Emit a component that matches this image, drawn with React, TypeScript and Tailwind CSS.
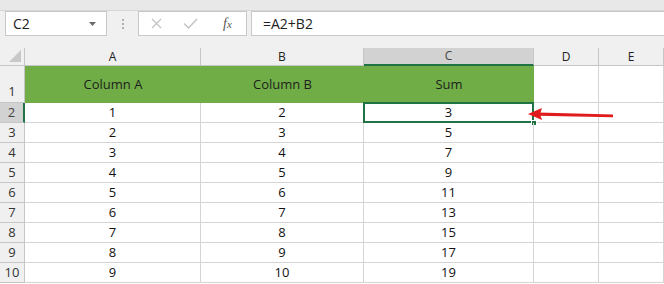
import React from 'react';

const cols = ['A', 'B', 'C', 'D', 'E'];
const widths = ['w-[176px]', 'w-[163px]', 'w-[170px]', 'w-[65px]', 'w-[65px]'];

const rows: [number, number, number][] = [
  [1, 2, 3],
  [2, 3, 5],
  [3, 4, 7],
  [4, 5, 9],
  [5, 6, 11],
  [6, 7, 13],
  [7, 8, 15],
  [8, 9, 17],
  [9, 10, 19],
];

function FormulaBar() {
  return (
    <div className="h-[48px] bg-[#f0f0f0] flex flex-col">
      <div className="h-[11px] bg-[#e8e8e8] border-b border-[#d6d6d6]" />
      <div className="flex items-stretch h-[25px] pl-[5px]">
        <div className="w-[102px] bg-white border border-[#c8c8c8] flex items-center justify-between pl-[7px] pr-[10px] text-[14px] text-[#222]">
          <span>C2</span>
          <svg width="7" height="4" viewBox="0 0 7 4">
            <path d="M0 0 L7 0 L3.5 4 Z" fill="#6a6a6a" />
          </svg>
        </div>
        <div className="w-[31px] flex flex-col items-center justify-center gap-[2px]">
          <span className="w-[2px] h-[2px] bg-[#b0b0b0]" />
          <span className="w-[2px] h-[2px] bg-[#b0b0b0]" />
          <span className="w-[2px] h-[2px] bg-[#b0b0b0]" />
        </div>
        <div className="w-[109px] bg-white border border-[#c8c8c8] flex items-center pl-[12px]">
          <svg width="11" height="11" viewBox="0 0 11 11">
            <path d="M1 1 L10 10 M10 1 L1 10" stroke="#c4c4c4" strokeWidth="1.3" />
          </svg>
          <svg width="15" height="11" viewBox="0 0 15 11" className="ml-[21px]">
            <path d="M1 5.5 L5.5 10 L14 1" stroke="#c4c4c4" strokeWidth="1.5" fill="none" />
          </svg>
          <span className="ml-[25px] italic text-[14px] text-[#555] font-['Liberation_Serif',serif]">
            f<span className="text-[11px]">x</span>
          </span>
        </div>
        <div className="w-[4px]" />
        <div className="flex-1 bg-white border border-[#c8c8c8] border-r-0 flex items-center pl-[11px] text-[14px] text-[#222]">
          =A2+B2
        </div>
      </div>
    </div>
  );
}

function HeaderRow() {
  return (
    <div className="flex h-[18px] bg-[#f0f0f0]">
      <div className="w-[25px] border-r border-b border-[#c6c6c6] flex items-end justify-end pr-[3px] pb-[3px]">
        <svg width="12" height="12" viewBox="0 0 12 12">
          <path d="M12 0 L12 12 L0 12 Z" fill="#c8c8c8" />
        </svg>
      </div>
      {cols.map((c, i) =>
        c === 'C' ? (
          <div
            key={c}
            className={`${widths[i]} bg-[#d2d2d2] border-r border-[#c6c6c6] border-b-2 border-b-[#217346] flex items-center justify-center text-[12px] text-[#444]`}
          >
            {c}
          </div>
        ) : (
          <div
            key={c}
            className={`${widths[i]} border-r border-b border-[#c6c6c6] flex items-center justify-center text-[12px] text-[#222]`}
          >
            {c}
          </div>
        )
      )}
    </div>
  );
}

export default function App() {
  return (
    <div className="w-[664px] h-[284px] overflow-hidden bg-white font-['Open_Sans','Noto_Sans',sans-serif] relative">
      <FormulaBar />
      <HeaderRow />

      <div className="flex h-[37px]">
        <div className="w-[25px] bg-[#f0f0f0] border-r border-b border-[#c6c6c6] flex items-end justify-center pb-[1px] text-[13px] text-[#333]">
          1
        </div>
        <div className="w-[176px] bg-[#70ad47] flex items-center justify-center text-[13px] text-[#1e1e1e]">
          Column A
        </div>
        <div className="w-[163px] bg-[#70ad47] flex items-center justify-center text-[13px] text-[#1e1e1e]">
          Column B
        </div>
        <div className="w-[170px] bg-[#70ad47] flex items-center justify-center text-[13px] text-[#1e1e1e]">
          Sum
        </div>
        <div className="w-[65px] border-r border-b border-[#d4d4d4]" />
        <div className="w-[65px] border-r border-b border-[#d4d4d4]" />
      </div>

      {rows.map((r, idx) => {
        const n = idx + 2;
        const selected = n === 2;
        return (
          <div key={n} className="flex h-[20px]">
            {selected ? (
              <div className="w-[25px] bg-[#d2d2d2] border-b border-[#c6c6c6] border-r-2 border-r-[#217346] flex items-center justify-center text-[13px] text-[#444]">
                {n}
              </div>
            ) : (
              <div className="w-[25px] bg-[#f0f0f0] border-r border-b border-[#c6c6c6] flex items-center justify-center text-[13px] text-[#333]">
                {n}
              </div>
            )}
            {r.map((v, i) => (
              <div
                key={i}
                className={`${widths[i]} relative border-r border-b border-[#d4d4d4] flex items-center justify-center text-[13px] text-[#111]`}
              >
                {v}
                {selected && i === 2 && (
                  <>
                    <div className="absolute -left-[1px] -top-[1px] right-[-1px] bottom-[-1px] border-2 border-[#217346]" />
                    <div className="absolute right-[-4px] bottom-[-4px] w-[6px] h-[6px] bg-[#217346] border border-white" />
                  </>
                )}
              </div>
            ))}
            <div className="w-[65px] border-r border-b border-[#d4d4d4]" />
            <div className="w-[65px] border-r border-b border-[#d4d4d4]" />
          </div>
        );
      })}

      <svg
        className="absolute left-[524px] top-[104px]"
        width="94"
        height="20"
        viewBox="0 0 94 20"
      >
        <path d="M14 8.6 L89 10.6 L89 13.2 L14 11.8 Z" fill="#e01b1b" />
        <path d="M4 10 L18 4 L16 10 L18 16 Z" fill="#e01b1b" />
      </svg>
    </div>
  );
}
